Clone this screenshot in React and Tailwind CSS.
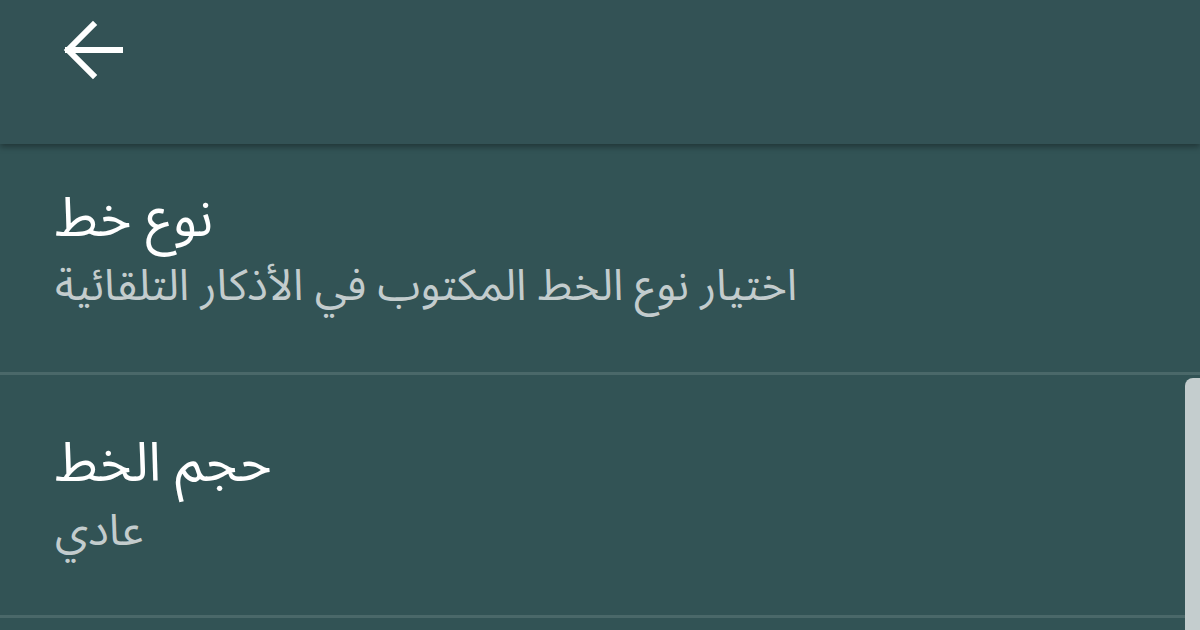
import React from "react";

const arabic = { fontFamily: '"Noto Sans Arabic", "Noto Sans", "DejaVu Sans", sans-serif' };

function BackArrow() {
    return (
        <svg width="66" height="60" viewBox="0 0 66 60" fill="none">
            <path
                d="M63 30H11M36 5L11 30L36 55"
                stroke="white"
                strokeWidth="6"
                strokeLinecap="square"
            />
        </svg>
    );
}

function SettingItem({ title, subtitle, className }) {
    return (
        <div className={`flex flex-col justify-center px-[55px] border-b-[3px] border-[#4a6869] ${className}`}>
            <div dir="rtl" className="self-start text-[54px] leading-[68px] text-white" style={arabic}>
                {title}
            </div>
            <div dir="rtl" className="self-start text-[43.5px] leading-[66px] text-[#c3cccd]" style={arabic}>
                {subtitle}
            </div>
        </div>
    );
}

export default function App() {
    return (
        <div className="w-[1200px] h-[630px] overflow-hidden bg-[#325355] relative">
            <header className="h-[144px] bg-[#335255] shadow-[0_3px_6px_rgba(0,0,0,0.35)] flex items-start px-[57px] pt-[20px] relative z-10">
                <BackArrow />
            </header>
            <SettingItem title="نوع خط" subtitle="اختيار نوع الخط المكتوب في الأذكار التلقائية" className="h-[231px] pb-[12px]" />
            <SettingItem title="حجم الخط" subtitle="عادي" className="h-[243px] pt-[4px]" />
            {/* scrollbar */}
            <div className="absolute right-0 top-[378px] w-[15px] h-[260px] bg-[#c4cdce] rounded-tl-[8px]" />
        </div>
    );
}
